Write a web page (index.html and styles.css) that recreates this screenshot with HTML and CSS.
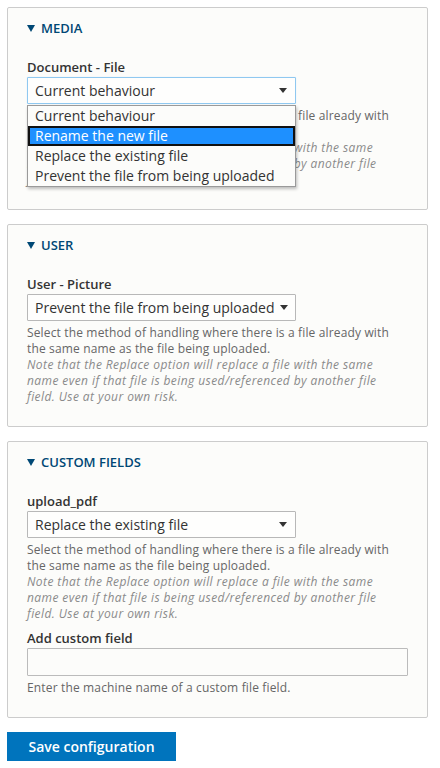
FILE: index.html
```html
<!DOCTYPE html>
<html lang="en">
<head>
<meta charset="utf-8">
<title>File settings</title>
<link rel="stylesheet" href="styles.css">
</head>
<body>
<form class="form">
  <section class="details">
    <div class="summary"><span class="tri"></span>MEDIA</div>
    <div class="item">
      <div class="label">Document - File</div>
      <div class="select-wrap">
        <div class="select is-focus"><span class="select-text">Current behaviour</span><span class="arrow"></span></div>
        <ul class="dropdown">
          <li>Current behaviour</li>
          <li class="active">Rename the new file</li>
          <li>Replace the existing file</li>
          <li>Prevent the file from being uploaded</li>
        </ul>
      </div>
      <div class="desc">Select the method of handling where there is a file already with the same name as the file being uploaded.<br><em>Note that the Replace option will replace a file with the same name even if that file is being used/referenced by another file field. Use at your own risk.</em></div>
    </div>
  </section>

  <section class="details">
    <div class="summary"><span class="tri"></span>USER</div>
    <div class="item">
      <div class="label">User - Picture</div>
      <div class="select"><span class="select-text">Prevent the file from being uploaded</span><span class="arrow"></span></div>
      <div class="desc">Select the method of handling where there is a file already with the same name as the file being uploaded.<br><em>Note that the Replace option will replace a file with the same name even if that file is being used/referenced by another file field. Use at your own risk.</em></div>
    </div>
  </section>

  <section class="details">
    <div class="summary"><span class="tri"></span>CUSTOM FIELDS</div>
    <div class="item">
      <div class="label">upload_pdf</div>
      <div class="select"><span class="select-text">Replace the existing file</span><span class="arrow"></span></div>
      <div class="desc">Select the method of handling where there is a file already with the same name as the file being uploaded.<br><em>Note that the Replace option will replace a file with the same name even if that file is being used/referenced by another file field. Use at your own risk.</em></div>
    </div>
    <div class="item item-text">
      <div class="label">Add custom field</div>
      <div class="input"></div>
      <div class="desc">Enter the machine name of a custom file field.</div>
    </div>
  </section>

  <div class="actions"><span class="button">Save configuration</span></div>
</form>
</body>
</html>
```
FILE: styles.css
```css
html, body {
  margin: 0;
  background: #ffffff;
}
body {
  padding: 7px 12px 0 7px;
  font-family: "Open Sans", "Liberation Sans", sans-serif;
  color: #333333;
}
.form {
  display: flex;
  flex-direction: column;
  gap: 14px;
}
.details {
  border: 1px solid #cccccc;
  border-radius: 2px;
  background: #fcfcfa;
  padding: 12px 19px 21px 19px;
}
.summary {
  display: flex;
  align-items: center;
  font-size: 13px;
  line-height: 16px;
  font-weight: 600;
  color: #004875;
}
.tri {
  width: 0;
  height: 0;
  border-left: 4px solid transparent;
  border-right: 4px solid transparent;
  border-top: 7px solid #004875;
  margin: 1px 6px 0 0;
}
.item {
  margin-top: 22px;
}
.item-text {
  margin-top: 7px;
}
.label {
  font-size: 13px;
  line-height: 18px;
  font-weight: 600;
  color: #333333;
}
.select-wrap {
  position: relative;
  width: 269px;
}
.select {
  margin-top: 1px;
  width: 269px;
  height: 27px;
  box-sizing: border-box;
  border: 1px solid #b8b8b8;
  border-radius: 1px;
  background: #fefefd;
  display: flex;
  align-items: center;
  padding: 0 8px 0 7px;
  font-size: 14px;
  color: #333333;
}
.select.is-focus {
  border-color: #8fc8f0;
  box-shadow: 0 0 1px #bfe2fa;
}
.select-text {
  flex: 1;
  white-space: nowrap;
}
.arrow {
  width: 0;
  height: 0;
  border-left: 4px solid transparent;
  border-right: 4px solid transparent;
  border-top: 5px solid #333333;
  margin-left: 5px;
}
.dropdown {
  position: absolute;
  left: 0;
  top: 28px;
  width: 269px;
  box-sizing: border-box;
  margin: 0;
  padding: 0;
  list-style: none;
  background: #fcfcfa;
  border: 1px solid #9a9a9a;
  box-shadow: 1px 2px 3px rgba(0, 0, 0, 0.25);
  font-size: 14px;
  color: #333333;
  z-index: 2;
}
.dropdown li {
  height: 20px;
  line-height: 20px;
  padding-left: 7px;
  box-sizing: border-box;
  white-space: nowrap;
}
.dropdown li.active {
  background: #1e90ff;
  color: #ffffff;
  border: 2px solid #111111;
  line-height: 16px;
  padding-left: 5px;
}
.desc {
  margin-top: 4px;
  max-width: 368px;
  font-size: 12px;
  line-height: 16px;
  letter-spacing: 0.15px;
  color: #666666;
}
.desc em {
  letter-spacing: 0.42px;
  color: #8a8a8a;
}
.input {
  margin-top: 1px;
  height: 28px;
  box-sizing: border-box;
  border: 1px solid #bbbbbb;
  border-radius: 1px;
  background: #fcfcfa;
}
.actions {
  display: flex;
}
.button {
  display: flex;
  align-items: center;
  justify-content: center;
  width: 169px;
  height: 29px;
  background: #0074bd;
  color: #ffffff;
  font-size: 14px;
  font-weight: 600;
}
```
